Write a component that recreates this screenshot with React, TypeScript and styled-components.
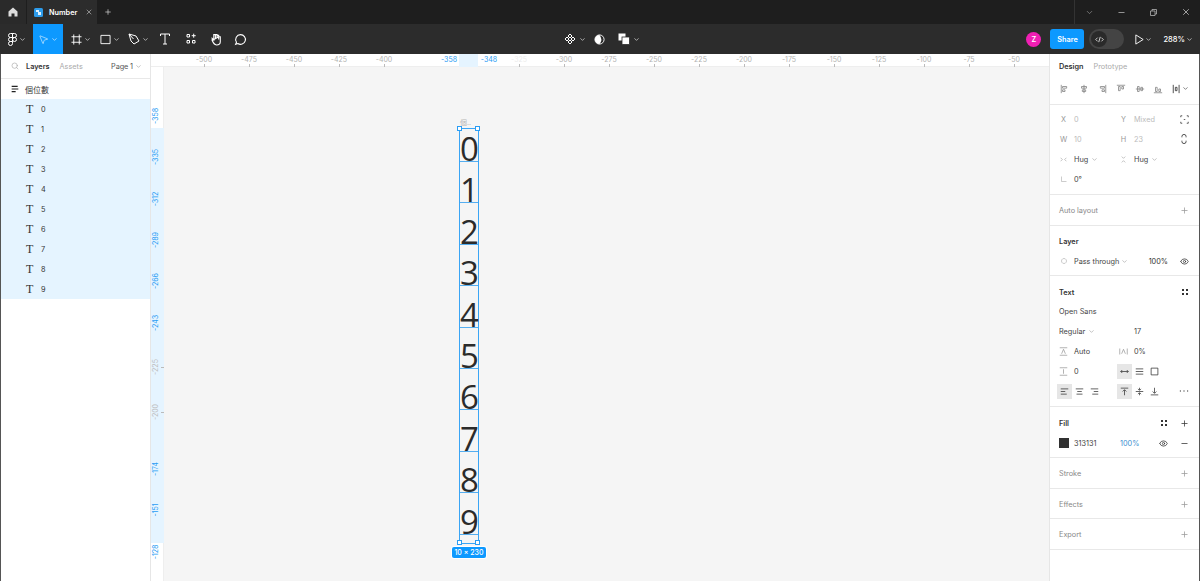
import React from 'react';
import styled, { createGlobalStyle } from 'styled-components';
import { ChevronDown, Minus, Plus, X, Eye, MousePointer2, Search } from 'lucide-react';

const GlobalStyle = createGlobalStyle`
  html, body { margin: 0; padding: 0; overflow: hidden; }
  body { font-family: Inter, "Noto Sans CJK TC", sans-serif; font-size: 7.3px; color: #333; background: #fff; }
`;

const H_TICKS = [-500, -475, -450, -425, -400, -375, -350, -325, -300, -275, -250, -225, -200, -175, -150, -125, -100, -75, -50];
const V_LABELS: { y: number; t: string; sel: boolean }[] = [
  { y: 116, t: '-358', sel: true },
  { y: 157, t: '-335', sel: true },
  { y: 199, t: '-312', sel: true },
  { y: 240, t: '-289', sel: true },
  { y: 281, t: '-266', sel: true },
  { y: 323, t: '-243', sel: true },
  { y: 367, t: '-225', sel: false },
  { y: 412, t: '-200', sel: false },
  { y: 469, t: '-174', sel: true },
  { y: 510, t: '-151', sel: true },
  { y: 552, t: '-128', sel: true },
];

const Page = styled.div`
  width: 1200px;
  height: 581px;
  display: flex;
  flex-direction: column;
  overflow: hidden;
`;

const TitleBar = styled.div`
  height: 24px;
  background: #1e1e1e;
  display: flex;
  align-items: stretch;
  color: #fff;
  flex: none;
`;

const HomeTab = styled.div`
  width: 26px;
  background: #2a2a2a;
  display: flex;
  align-items: center;
  justify-content: center;
`;

const FileTab = styled.div`
  width: 70px;
  margin-left: 1px;
  background: #2c2c2c;
  display: flex;
  align-items: center;
  padding-left: 7px;
  gap: 6px;
  box-sizing: border-box;
  font-size: 7.3px;
  font-weight: 600;
`;

const TabName = styled.span`
  width: 30px;
`;

const NewTab = styled.div`
  width: 22px;
  display: flex;
  align-items: center;
  justify-content: center;
  color: #ddd;
`;

const TitleSpacer = styled.div`
  flex: 1;
`;

const WindowControls = styled.div`
  width: 126px;
  border-left: 1px solid #333;
  display: flex;
  align-items: center;
  justify-content: space-between;
  padding: 0 9px 0 10px;
  box-sizing: border-box;
  color: #aaa;
`;

const Toolbar = styled.div`
  height: 30px;
  background: #2c2c2c;
  color: #fff;
  display: flex;
  align-items: stretch;
  position: relative;
  flex: none;
`;

const ToolGroup = styled.div`
  display: flex;
  align-items: stretch;
`;

const Tool = styled.div<{ $active?: boolean; $w: number; $mr?: number }>`
  width: ${(p) => p.$w}px;
  margin-right: ${(p) => p.$mr ?? 0}px;
  display: flex;
  align-items: center;
  justify-content: center;
  gap: 2px;
  background: ${(p) => (p.$active ? '#0d99ff' : 'transparent')};
  color: #fff;
`;

const CenterTools = styled.div`
  flex: 1;
  display: flex;
  align-items: center;
  justify-content: center;
  gap: 8px;
  padding-right: 76px;
`;

const CenterTool = styled.div<{ $mr?: number }>`
  display: flex;
  align-items: center;
  gap: 3px;
  margin-right: ${(p) => p.$mr ?? 0}px;
`;

const RightTools = styled.div`
  display: flex;
  align-items: center;
  padding-right: 7px;
`;

const Avatar = styled.div`
  width: 15px;
  height: 15px;
  border-radius: 50%;
  background: #f01fb4;
  color: #fff;
  font-size: 7.3px;
  font-weight: 600;
  display: flex;
  align-items: center;
  justify-content: center;
  margin-right: 9px;
`;

const ShareButton = styled.div`
  width: 34px;
  height: 20px;
  border-radius: 3px;
  background: #0d99ff;
  color: #fff;
  font-size: 7.3px;
  font-weight: 600;
  display: flex;
  align-items: center;
  justify-content: center;
  margin-right: 5px;
`;

const DevToggle = styled.div`
  width: 35px;
  height: 20px;
  border-radius: 10px;
  background: #444;
  padding: 2px;
  box-sizing: border-box;
  margin-right: 10px;
`;

const DevKnob = styled.div`
  width: 16px;
  height: 16px;
  border-radius: 50%;
  background: #2a2a2a;
  display: flex;
  align-items: center;
  justify-content: center;
`;

const ZoomLevel = styled.div`
  display: flex;
  align-items: center;
  gap: 1px;
  font-size: 7.5px;
  font-weight: 500;
  margin-left: 11px;
`;

const Main = styled.div`
  flex: 1;
  display: flex;
  min-height: 0;
`;

const LeftPanel = styled.div`
  width: 151px;
  flex: none;
  background: #fff;
  border-left: 1px solid #555;
  border-right: 1px solid #e6e6e6;
  box-sizing: border-box;
  display: flex;
  flex-direction: column;
`;

const PanelTabs = styled.div`
  height: 25px;
  box-sizing: border-box;
  display: flex;
  align-items: center;
  padding: 0 8px 0 10px;
  border-bottom: 1px solid #e8e8e8;
  font-size: 7.3px;
  color: #aaa;
  flex: none;
`;

const LayersTab = styled.span`
  color: #333;
  font-weight: 600;
  margin-left: 7px;
  margin-right: 10px;
`;

const PageName = styled.span`
  margin-left: auto;
  color: #555;
  display: flex;
  align-items: center;
  gap: 2px;
  letter-spacing: -0.1px;
`;

const FrameRow = styled.div`
  height: 20px;
  display: flex;
  align-items: center;
  padding-left: 10px;
  gap: 6px;
  font-size: 8px;
  color: #333;
  flex: none;
`;

const LayerRow = styled.div`
  height: 20px;
  background: #e5f4ff;
  display: flex;
  align-items: center;
  padding-left: 25px;
  gap: 6px;
  font-size: 7.3px;
  color: #333;
  flex: none;
`;

const TIcon = styled.span`
  font-family: "Liberation Serif", serif;
  font-size: 12px;
  width: 9px;
  color: #333;
`;

const Stage = styled.div`
  flex: 1;
  position: relative;
  background: #f5f5f5;
  overflow: hidden;
`;

const RulerTop = styled.div`
  position: absolute;
  left: 0;
  right: 0;
  top: 0;
  height: 13px;
  background: #fff;
  border-bottom: 1px solid #eee;
  box-sizing: border-box;
`;

const RulerLeft = styled.div`
  position: absolute;
  left: 0;
  top: 0;
  bottom: 0;
  width: 13px;
  background: #fff;
  border-right: 1px solid #eee;
  box-sizing: border-box;
`;

const RulerHighlightV = styled.div`
  position: absolute;
  left: 0;
  width: 13px;
  top: 74px;
  height: 415px;
  background: #e5f4ff;
`;

const RulerHighlightH = styled.div`
  position: absolute;
  left: 308px;
  width: 19px;
  top: 0;
  height: 13px;
  background: #e5f4ff;
`;

const HLabel = styled.span<{ $sel?: boolean; $faint?: boolean }>`
  position: absolute;
  top: 1px;
  font-size: 7px;
  transform: translateX(-50%);
  color: ${(p) => (p.$sel ? '#2a9df4' : '#b3b3b3')};
  opacity: ${(p) => (p.$faint ? 0.25 : 1)};
`;

const HTick = styled.span`
  position: absolute;
  top: 10px;
  width: 1px;
  height: 3px;
  background: #bbb;
`;

const VLabel = styled.span<{ $sel?: boolean }>`
  position: absolute;
  left: 0;
  font-size: 7px;
  line-height: 9px;
  writing-mode: vertical-rl;
  transform: translateY(-50%) rotate(180deg);
  color: ${(p) => (p.$sel ? '#2a9df4' : '#bdbdbd')};
`;

const VTick = styled.span`
  position: absolute;
  left: 10px;
  width: 3px;
  height: 1px;
  background: #bbb;
`;

const Selection = styled.div`
  position: absolute;
  left: 308px;
  top: 74px;
  width: 20px;
  height: 416px;
  border: 1px solid #3aa5f5;
  box-sizing: border-box;
  display: flex;
  flex-direction: column;
`;

const DigitBox = styled.div`
  flex: 1;
  min-height: 0;
  position: relative;
  font-family: "Open Sans", sans-serif;
  font-size: 33px;
  line-height: 40px;
  color: #2b2b2b;
  text-align: center;
  &::after {
    content: '';
    position: absolute;
    left: 0;
    right: 0;
    top: 32px;
    height: 1px;
    background: #55aef0;
  }
`;

const Handle = styled.span<{ $x: number; $y: number }>`
  position: absolute;
  left: ${(p) => p.$x}px;
  top: ${(p) => p.$y}px;
  width: 5px;
  height: 5px;
  background: #fff;
  border: 1px solid #2a9df4;
  box-sizing: border-box;
`;

const SizeBadge = styled.div`
  position: absolute;
  left: 301px;
  top: 493px;
  width: 34px;
  height: 11px;
  border-radius: 2px;
  background: #0d99ff;
  box-shadow: 0 0 0 1px #fff;
  color: #fff;
  font-size: 7px;
  font-weight: 500;
  display: flex;
  align-items: center;
  justify-content: center;
`;

const GhostName = styled.span`
  position: absolute;
  left: 309px;
  top: 65px;
  font-size: 7px;
  line-height: 8px;
  color: #b5b5b5;
`;

const RightPanel = styled.div`
  width: 151px;
  flex: none;
  box-sizing: border-box;
  background: #fff;
  border-left: 1px solid #e6e6e6;
  border-right: 1px solid #555;
  display: flex;
  flex-direction: column;
`;

const Section = styled.div<{ $h: number }>`
  height: ${(p) => p.$h}px;
  flex: none;
  box-sizing: border-box;
  border-bottom: 1px solid #e8e8e8;
  padding: 0 10px 0 9px;
`;

const DesignTabs = styled.div`
  height: 25px;
  display: flex;
  align-items: center;
  gap: 10px;
  font-size: 7.3px;
  color: #aaa;
`;

const DesignTab = styled.span`
  color: #333;
  font-weight: 600;
`;

const AlignRow = styled.div`
  height: 19px;
  display: flex;
  align-items: center;
  justify-content: space-between;
  padding-left: 1px;
  color: #888;
`;

const DistributeButton = styled.span`
  display: flex;
  align-items: center;
`;

const PropList = styled.div`
  padding-top: 4px;
`;

const PropRow = styled.div`
  height: 20px;
  display: flex;
  align-items: center;
  font-size: 7.3px;
  color: #444;
`;

const PropCell = styled.div<{ $w?: number; $muted?: boolean }>`
  width: ${(p) => (p.$w ? `${p.$w}px` : 'auto')};
  display: flex;
  align-items: center;
  gap: 6px;
  color: ${(p) => (p.$muted ? '#bbb' : '#444')};
  flex: none;
`;

const PropKey = styled.span`
  width: 9px;
  color: #999;
  display: inline-flex;
  justify-content: center;
`;

const Caret = styled.span`
  display: inline-flex;
  margin-left: -3px;
`;

const PassCaret = styled.span`
  display: inline-flex;
  margin-left: 2px;
`;

const RowEnd = styled.div`
  margin-left: auto;
  display: flex;
  align-items: center;
  color: #333;
  gap: 12px;
`;

const SectionHead = styled.div<{ $h?: number; $mb?: number }>`
  height: ${(p) => p.$h ?? 30}px;
  margin-bottom: ${(p) => p.$mb ?? 0}px;
  display: flex;
  align-items: center;
  justify-content: space-between;
  font-size: 7.3px;
  color: #888;
`;

const SectionTitle = styled.span`
  color: #333;
  font-weight: 600;
`;

const Pressed = styled.span<{ $ml?: number }>`
  width: 15px;
  height: 15px;
  margin-left: ${(p) => p.$ml ?? 0}px;
  background: #e6e6e6;
  display: inline-flex;
  align-items: center;
  justify-content: center;
  flex: none;
`;

const Plain = styled.span`
  width: 15px;
  height: 15px;
  display: inline-flex;
  align-items: center;
  justify-content: center;
  flex: none;
`;

const Swatch = styled.span`
  width: 10px;
  height: 10px;
  background: #313131;
  flex: none;
`;

const FillCell = styled.div`
  width: 61px;
  display: flex;
  align-items: center;
  gap: 5px;
  flex: none;
`;

const Blue = styled.span`
  color: #3d8fd0;
`;

const Ic = ({ d, s = 10, w = 1, c = 'currentColor' }: { d: string; s?: number; w?: number; c?: string }) => (
  <svg width={s} height={s} viewBox="0 0 12 12" fill="none" stroke={c} strokeWidth={w}>
    <path d={d} />
  </svg>
);

const Chev = ({ c = '#fff' }: { c?: string }) => <ChevronDown size={7} color={c} strokeWidth={2} />;
const Grid4 = () => (
  <svg width="8" height="8" viewBox="0 0 8 8" fill="#333">
    <rect x="1" y="1" width="2" height="2" />
    <rect x="5" y="1" width="2" height="2" />
    <rect x="1" y="5" width="2" height="2" />
    <rect x="5" y="5" width="2" height="2" />
  </svg>
);
const FigmaLogo = () => (
  <svg width="9" height="13" viewBox="0 0 9 13" fill="none" stroke="#fff" strokeWidth="1">
    <path d="M4.5.5H2.5a2 2 0 0 0 0 4h2zM4.5.5h2a2 2 0 0 1 0 4h-2zM4.5 4.5h-2a2 2 0 0 0 0 4h2zM8.5 6.5a2 2 0 1 1-4 0 2 2 0 0 1 4 0zM4.5 8.5h-2a2 2 0 1 0 2 2z" />
  </svg>
);
const TabBadge = () => (
  <svg width="9" height="9" viewBox="0 0 9 9">
    <rect width="9" height="9" rx="1.5" fill="#2d9bea" />
    <path d="M2 2h3v2H2zM4 4h3v3H4z" fill="#dff1ff" />
  </svg>
);

const ALIGN_ICONS = [
  'M1.5 1v10M3 3h5v2H3zM3 7h3v2H3z',
  'M6 1v10M3 3h6v2H3zM4 7h4v2H4z',
  'M10.5 1v10M4 3h5v2H4zM6 7h3v2H6z',
  'M1 1.5h10M3 3v5h2V3zM7 3v3h2V3z',
  'M1 6h10M3 3h2v6H3zM7 4h2v4H7z',
  'M1 10.5h10M3 4v5h2V4zM7 6v3h2V6z',
];

export default function App() {
  return (
    <Page>
      <GlobalStyle />
      <TitleBar>
        <HomeTab>
          <svg width="10" height="10" viewBox="0 0 10 10" fill="#ddd">
            <path d="M5 .5 9.500 4.500V9.500H6.500V6.500h-3v3H.5V4.500z" />
          </svg>
        </HomeTab>
        <FileTab>
          <TabBadge />
          <TabName>Number</TabName>
          <X size={8} color="#bbb" />
        </FileTab>
        <NewTab>
          <Plus size={8} />
        </NewTab>
        <TitleSpacer />
        <WindowControls>
          <ChevronDown size={9} color="#888" />
          <Minus size={9} color="#bbb" />
          <Ic s={9} c="#bbb" d="M2 4h6v6H2zM4 4V2h6v6H8" />
          <X size={10} color="#bbb" />
        </WindowControls>
      </TitleBar>
      <Toolbar>
        <ToolGroup>
          <Tool $w={33}>
            <FigmaLogo />
            <Chev />
          </Tool>
          <Tool $w={30} $mr={3} $active>
            <MousePointer2 size={11} strokeWidth={1.2} />
            <Chev />
          </Tool>
          <Tool $w={29}>
            <Ic s={11} d="M3 .5v11M9 .5v11M.5 3h11M.5 9h11" />
            <Chev />
          </Tool>
          <Tool $w={29}>
            <Ic s={11} d="M1 1.500h10v9H1z" />
            <Chev />
          </Tool>
          <Tool $w={29}>
            <Ic s={12} d="M1 1 3 8l3 3 5-3-3-5zM1 1l4.500 5" />
            <Chev />
          </Tool>
          <Tool $w={24}>
            <Ic s={12} d="M1.500 3V1h9v2M6 1v10M4 11h4" />
          </Tool>
          <Tool $w={28}>
            <Ic s={12} d="M2 1.500h2.500v2.500H2zM2 7.500h2.500v2.500H2zM7.500 7.500h2.500v2.500h-2.500zM8.700 .7v4M6.700 2.700h4" />
          </Tool>
          <Tool $w={22}>
            <Ic s={13} d="M2 6.500V5l1.500 1.500V2.500M3.500 5V1.500H5V5M5 1.500H6.500V5M6.500 2.200H8V6M8 3.500H9.500V8C9.500 10 8 11 6 11S3.500 10 2 7z" />
          </Tool>
          <Tool $w={26}>
            <Ic s={13} d="M6 1.500a4.500 4.500 0 1 1-2.500 8.200L1.500 10.500l.8-2A4.500 4.500 0 0 1 6 1.500z" />
          </Tool>
        </ToolGroup>
        <CenterTools>
          <CenterTool>
            <Ic s={12} d="M6 1 8 3 6 5 4 3zM3 4 5 6 3 8 1 6zM9 4 11 6 9 8 7 6zM6 7 8 9 6 11 4 9z" />
            <Chev />
          </CenterTool>
          <CenterTool $mr={5}>
            <svg width="11" height="11" viewBox="0 0 12 12">
              <circle cx="6" cy="6" r="5" fill="#2c2c2c" stroke="#fff" strokeWidth="1" />
              <path d="M6 1a5 5 0 0 0 0 10 8 8 0 0 0 0-10z" fill="#fff" />
            </svg>
          </CenterTool>
          <CenterTool>
            <svg width="12" height="12" viewBox="0 0 12 12" fill="#fff">
              <rect x="0.500" y="0.500" width="7" height="7" />
              <rect x="4" y="4" width="7.500" height="7.500" stroke="#2c2c2c" strokeWidth="0.800" />
            </svg>
            <Chev />
          </CenterTool>
        </CenterTools>
        <RightTools>
          <Avatar>Z</Avatar>
          <ShareButton>Share</ShareButton>
          <DevToggle>
            <DevKnob>
              <Ic s={9} d="M3.500 3.500 1 6l2.500 2.500M8.500 3.500 11 6 8.500 8.500M7 2.500 5 9.500" />
            </DevKnob>
          </DevToggle>
          <Ic s={11} d="M2 1v10l8-5z" />
          <Chev />
          <ZoomLevel>
            288%
            <Chev />
          </ZoomLevel>
        </RightTools>
      </Toolbar>
      <Main>
        <LeftPanel>
          <PanelTabs>
            <Search size={8} color="#aaa" />
            <LayersTab>Layers</LayersTab>
            Assets
            <PageName>
              Page 1
              <Chev c="#999" />
            </PageName>
          </PanelTabs>
          <FrameRow>
            <Ic s={8} w={1.800} c="#222" d="M1 2h9M1 6h10M1 10h6" />
            個位數
          </FrameRow>
          {[0, 1, 2, 3, 4, 5, 6, 7, 8, 9].map((n) => (
            <LayerRow key={n}>
              <TIcon>T</TIcon>
              {n}
            </LayerRow>
          ))}
        </LeftPanel>
        <Stage>
          <RulerLeft>
            <RulerHighlightV />
            {V_LABELS.map((l) => (
              <React.Fragment key={l.t}>
                <VLabel $sel={l.sel} style={{ top: l.y - 54 }}>
                  {l.t}
                </VLabel>
                {!l.sel && <VTick style={{ top: l.y - 54 }} />}
              </React.Fragment>
            ))}
          </RulerLeft>
          <RulerTop>
            <RulerHighlightH />
            {H_TICKS.map((v) => {
              const x = 53 + ((v + 500) / 25) * 45;
              if (v === -375 || v === -350) return null;
              return (
                <React.Fragment key={v}>
                  <HLabel style={{ left: x }} $faint={v === -325}>
                    {v}
                  </HLabel>
                  <HTick style={{ left: x }} />
                </React.Fragment>
              );
            })}
            <HLabel $sel style={{ left: 298 }}>
              -358
            </HLabel>
            <HLabel $sel style={{ left: 338 }}>
              -348
            </HLabel>
          </RulerTop>
          <GhostName>個..</GhostName>
          <Selection>
            {[0, 1, 2, 3, 4, 5, 6, 7, 8, 9].map((n) => (
              <DigitBox key={n}>{n}</DigitBox>
            ))}
          </Selection>
          <Handle $x={306} $y={72} />
          <Handle $x={324} $y={72} />
          <Handle $x={306} $y={486} />
          <Handle $x={324} $y={486} />
          <SizeBadge>10 × 230</SizeBadge>
        </Stage>
        <RightPanel>
          <Section $h={51}>
            <DesignTabs>
              <DesignTab>Design</DesignTab>
              Prototype
            </DesignTabs>
            <AlignRow>
              {ALIGN_ICONS.map((d) => (
                <Ic key={d} s={10} d={d} />
              ))}
              <DistributeButton>
                <Ic s={10} d="M1.500 1v10M8.500 1v10M4 4h2v4H4z" c="#333" />
                <Chev c="#333" />
              </DistributeButton>
            </AlignRow>
          </Section>
          <Section $h={90}>
            <PropList>
              <PropRow>
                <PropCell $w={60} $muted>
                  <PropKey>X</PropKey>0
                </PropCell>
                <PropCell $muted>
                  <PropKey>Y</PropKey>Mixed
                </PropCell>
                <RowEnd>
                  <Ic s={9} c="#333" d="M1 3V1h2M9 1h2v2M1 9v2h2M9 11h2V9M5 6h2" />
                </RowEnd>
              </PropRow>
              <PropRow>
                <PropCell $w={60} $muted>
                  <PropKey>W</PropKey>10
                </PropCell>
                <PropCell $muted>
                  <PropKey>H</PropKey>23
                </PropCell>
                <RowEnd>
                  <Ic s={10} c="#333" d="M3.500 4V3a2.500 2.500 0 0 1 5 0v1M3.500 8v1a2.500 2.500 0 0 0 5 0V8" />
                </RowEnd>
              </PropRow>
              <PropRow>
                <PropCell $w={60}>
                  <PropKey>
                    <Ic s={7} d="M1 3l3 3-3 3M11 3 8 6l3 3" />
                  </PropKey>
                  Hug
                  <Caret>
                    <Chev c="#999" />
                  </Caret>
                </PropCell>
                <PropCell>
                  <PropKey>
                    <Ic s={7} d="M3 1l3 3 3-3M3 11l3-3 3 3" />
                  </PropKey>
                  Hug
                  <Caret>
                    <Chev c="#999" />
                  </Caret>
                </PropCell>
              </PropRow>
              <PropRow>
                <PropCell>
                  <PropKey>
                    <Ic s={6} d="M1 1v10h10" />
                  </PropKey>
                  0°
                </PropCell>
              </PropRow>
            </PropList>
          </Section>
          <Section $h={31}>
            <SectionHead $h={31}>
              Auto layout
              <Plus size={9} color="#999" />
            </SectionHead>
          </Section>
          <Section $h={50}>
            <SectionHead $h={30} $mb={-5}>
              <SectionTitle>Layer</SectionTitle>
            </SectionHead>
            <PropRow>
              <PropCell>
                <PropKey>
                  <Ic s={6} d="M6 1a5 5 0 1 1-.01 0z" />
                </PropKey>
                <span>Pass through</span>
              </PropCell>
              <PassCaret>
                <Chev c="#999" />
              </PassCaret>
              <RowEnd>
                100%
                <Eye size={9} color="#333" />
              </RowEnd>
            </PropRow>
          </Section>
          <Section $h={131}>
            <SectionHead $h={32} $mb={-7}>
              <SectionTitle>Text</SectionTitle>
              <Grid4 />
            </SectionHead>
            <PropRow>Open Sans</PropRow>
            <PropRow>
              <PropCell $w={75}>
                <span>Regular</span>
                <Caret>
                  <Chev c="#999" />
                </Caret>
              </PropCell>
              17
            </PropRow>
            <PropRow>
              <PropCell $w={60}>
                <PropKey>
                  <Ic s={9} d="M1 1h10M1 11h10M3.500 9 6 3l2.500 6" />
                </PropKey>
                Auto
              </PropCell>
              <PropCell>
                <PropKey>
                  <Ic s={9} d="M1 2v8M11 2v8M3.500 9 6 3l2.500 6" />
                </PropKey>
                0%
              </PropCell>
            </PropRow>
            <PropRow>
              <PropCell $w={58}>
                <PropKey>
                  <Ic s={9} d="M1 1h10M1 11h10M6 3v6" />
                </PropKey>
                0
              </PropCell>
              <Pressed>
                <Ic s={9} c="#333" d="M1 6h10M3 4 1 6l2 2M9 4l2 2-2 2" />
              </Pressed>
              <Plain>
                <Ic s={9} c="#333" d="M1 2.500h10M1 6h10M1 9.500h10" />
              </Plain>
              <Plain>
                <Ic s={9} c="#333" d="M1.500 1.500h9v9h-9z" />
              </Plain>
            </PropRow>
            <PropRow>
              <Pressed $ml={-2}>
                <Ic s={9} c="#333" d="M1 2.500h10M1 6h6M1 9.500h8" />
              </Pressed>
              <Plain>
                <Ic s={9} c="#333" d="M1 2.500h10M3 6h6M2 9.500h8" />
              </Plain>
              <Plain>
                <Ic s={9} c="#333" d="M1 2.500h10M5 6h6M3 9.500h8" />
              </Plain>
              <Plain />
              <Pressed>
                <Ic s={9} c="#333" d="M1 1.500h10M6 11V4M3.500 6 6 3.500 8.500 6" />
              </Pressed>
              <Plain>
                <Ic s={9} c="#333" d="M1 6h10M6 1v3M6 8v3M4 2.500 6 4.500l2-2M4 9.500l2-2 2 2" />
              </Plain>
              <Plain>
                <Ic s={9} c="#333" d="M1 10.500h10M6 1v7M3.500 6 6 8.500 8.500 6" />
              </Plain>
              <RowEnd>
                <Ic s={10} w={1.400} c="#333" d="M1 6h1.400M5.300 6h1.400M9.600 6H11" />
              </RowEnd>
            </PropRow>
          </Section>
          <Section $h={51}>
            <SectionHead $h={32} $mb={-6}>
              <SectionTitle>Fill</SectionTitle>
              <RowEnd>
                <Grid4 />
                <Plus size={9} color="#333" />
              </RowEnd>
            </SectionHead>
            <PropRow>
              <FillCell>
                <Swatch />
                <span>313131</span>
              </FillCell>
              <Blue>100%</Blue>
              <RowEnd>
                <Eye size={9} color="#333" />
                <Minus size={9} color="#333" />
              </RowEnd>
            </PropRow>
          </Section>
          <Section $h={31}>
            <SectionHead $h={31}>
              Stroke
              <Plus size={9} color="#999" />
            </SectionHead>
          </Section>
          <Section $h={30}>
            <SectionHead $h={30}>
              Effects
              <Plus size={9} color="#999" />
            </SectionHead>
          </Section>
          <Section $h={31}>
            <SectionHead $h={31}>
              Export
              <Plus size={9} color="#999" />
            </SectionHead>
          </Section>
        </RightPanel>
      </Main>
    </Page>
  );
}
